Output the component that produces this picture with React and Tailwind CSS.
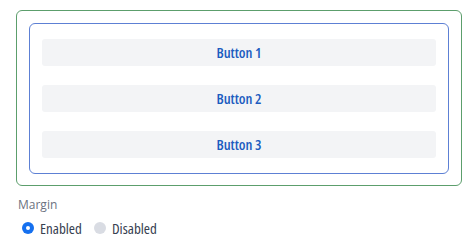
export default function App() {
  const buttons = ["Button 1", "Button 2", "Button 3"];
  return (
    <div className="w-[474px] h-[239px] bg-white pl-4 pt-[10px]" style={{ fontFamily: '"Open Sans", "Noto Sans", sans-serif' }}>
      <div className="w-[446px] h-[176px] rounded-[6px] border border-[#5c9e6c] p-3">
        <div className="h-[151px] rounded-[6px] border border-[#5d80d4] px-3 pt-[15px] flex flex-col gap-[19px]">
          {buttons.map((b) => (
            <div key={b} className="h-[27px] rounded-[3px] bg-[#f3f4f6] flex items-center justify-center text-[14.5px] font-semibold font-stretch-condensed text-[#1c5cc0]">
              {b}
            </div>
          ))}
        </div>
      </div>
      <div className="mt-[11px] pl-[2px] text-[12px] leading-[16px] text-[#6b7280]">Margin</div>
      <div className="mt-[5px] flex items-center text-[15px] leading-[20px] text-[#374151] pl-[6px] font-stretch-condensed">
        <span className="w-[12px] h-[12px] rounded-full bg-[#1570ef] flex items-center justify-center">
          <span className="w-[4px] h-[4px] rounded-full bg-white"></span>
        </span>
        <span className="ml-[6px]">Enabled</span>
        <span className="ml-[12px] w-[12px] h-[12px] rounded-full bg-[#d9dce3]"></span>
        <span className="ml-[6px]">Disabled</span>
      </div>
    </div>
  );
}
